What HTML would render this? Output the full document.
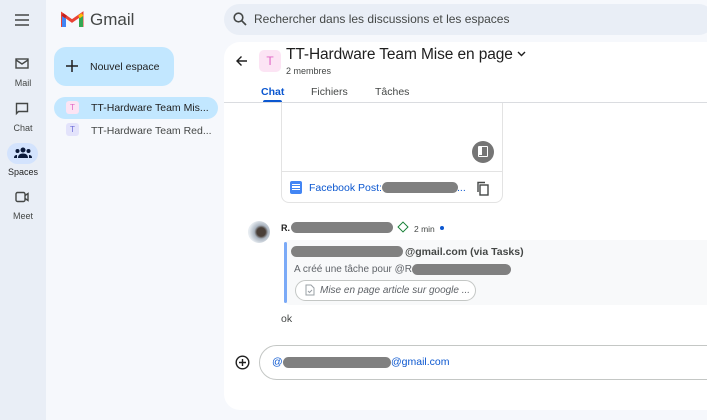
<!DOCTYPE html><html><head><meta charset="utf-8"><style>
*{margin:0;padding:0;box-sizing:border-box}
body{width:707px;height:420px;overflow:hidden;background:#f6f8fc;font-family:"Liberation Sans",sans-serif;position:relative;color:#1f1f1f}
.a{position:absolute}
.pill{position:absolute;background:#808080;border-radius:6px}
.rl{font-size:9px;color:#444746;text-align:center;width:46px;left:0}
</style></head><body>
<div class="a" style="left:0;top:0;width:46px;height:420px;background:#e9eef6"></div>
<svg class="a" style="left:14px;top:13px" width="16" height="14"><path d="M1 2h14M1 7h14M1 12h14" stroke="#444746" stroke-width="1.6"/></svg>
<svg class="a" style="left:15px;top:58px" width="14" height="12"><rect x="1" y="1" width="12" height="9" fill="none" stroke="#444746" stroke-width="1.4"/><path d="M1 2l6 4 6-4" fill="none" stroke="#444746" stroke-width="1.4"/></svg>
<div class="a rl" style="top:78px">Mail</div>
<svg class="a" style="left:15px;top:102px" width="14" height="14"><path d="M1.5 1.5h11v8h-9l-2 2z" fill="none" stroke="#444746" stroke-width="1.4"/></svg>
<div class="a rl" style="top:123px">Chat</div>
<div class="a" style="left:7px;top:143px;width:31px;height:21px;border-radius:11px;background:#d3e3fd"></div>
<svg class="a" style="left:14px;top:147px" width="18" height="12"><circle cx="9" cy="3" r="2.5" fill="#0b1a3a"/><circle cx="3.5" cy="4" r="2" fill="#0b1a3a"/><circle cx="14.5" cy="4" r="2" fill="#0b1a3a"/><path d="M4 11c0-3 2-4.5 5-4.5s5 1.5 5 4.5zM0 11c0-2 1-3 3-3v3zM18 11c0-2-1-3-3-3v3z" fill="#0b1a3a"/></svg>
<div class="a rl" style="top:167px;color:#1f1f1f">Spaces</div>
<svg class="a" style="left:15px;top:191px" width="14" height="12"><rect x="1" y="1.5" width="9" height="9" rx="1.5" fill="none" stroke="#444746" stroke-width="1.4"/><path d="M10 4.5l3-2v7l-3-2" fill="none" stroke="#444746" stroke-width="1.4"/></svg>
<div class="a rl" style="top:211px">Meet</div>
<svg class="a" style="left:61px;top:11px" width="23" height="17"><path d="M1 16V3l10 7 10-7v13" fill="none" stroke="#ea4335" stroke-width="3"/><path d="M1 5v11h4V7z" fill="#4285f4"/><path d="M22 5v11h-4V7z" fill="#34a853"/><path d="M1.5 3.5 5 6" stroke="#c5221f" stroke-width="3"/><path d="M21.5 3.5 18 6" stroke="#fbbc04" stroke-width="3"/></svg>
<div class="a" style="left:90px;top:10px;font-size:17px;color:#444746">Gmail</div>
<div class="a" style="left:54px;top:47px;width:120px;height:39px;border-radius:12px;background:#c2e7ff"></div>
<svg class="a" style="left:66px;top:60px" width="12" height="12"><path d="M6 0v12M0 6h12" stroke="#1f1f1f" stroke-width="1.5"/></svg>
<div class="a" style="left:90px;top:61px;font-size:10.5px">Nouvel espace</div>
<div class="a" style="left:54px;top:97px;width:164px;height:22px;border-radius:11px;background:#c2e7ff"></div>
<div class="a" style="left:66px;top:101px;width:13px;height:13px;border-radius:3px;background:#fce4f4;color:#e066c5;font-size:8px;text-align:center;line-height:13px">T</div>
<div class="a" style="left:91px;top:102px;font-size:10.5px;color:#1f1f1f">TT-Hardware Team Mis...</div>
<div class="a" style="left:66px;top:123px;width:13px;height:13px;border-radius:3px;background:#e3e3fb;color:#6f6fd8;font-size:8px;text-align:center;line-height:13px">T</div>
<div class="a" style="left:91px;top:125px;font-size:10.5px;color:#444746">TT-Hardware Team Red...</div>
<div class="a" style="left:224px;top:4px;width:490px;height:31px;border-radius:16px;background:#e9eef6"></div>
<svg class="a" style="left:233px;top:12px" width="14" height="14"><circle cx="5.5" cy="5.5" r="4.3" fill="none" stroke="#444746" stroke-width="1.6"/><path d="M8.7 8.7 13 13" stroke="#444746" stroke-width="1.7"/></svg>
<div class="a" style="left:254px;top:12px;font-size:12px;color:#444746">Rechercher dans les discussions et les espaces</div>
<div class="a" style="left:224px;top:42px;width:500px;height:368px;border-radius:16px;background:#fff"></div>
<svg class="a" style="left:235px;top:55px" width="13" height="12"><path d="M12 6H2M6.5 1.5 2 6l4.5 4.5" fill="none" stroke="#1f1f1f" stroke-width="1.4"/></svg>
<div class="a" style="left:259px;top:50px;width:22px;height:22px;border-radius:5px;background:#fce4f4;color:#e066c5;font-size:12px;text-align:center;line-height:22px">T</div>
<div class="a" style="left:286px;top:46px;font-size:15.5px;letter-spacing:-0.1px;white-space:nowrap">TT-Hardware Team Mise en page</div>
<svg class="a" style="left:517px;top:51px" width="9" height="6"><path d="M1 1l3.5 3.5L8 1" fill="none" stroke="#1f1f1f" stroke-width="1.4"/></svg>
<div class="a" style="left:286px;top:66px;font-size:9px;color:#444746">2 membres</div>
<div class="a" style="left:261px;top:86px;font-size:10.5px;color:#0b57d0;font-weight:bold">Chat</div>
<div class="a" style="left:311px;top:86px;font-size:10.5px;color:#444746">Fichiers</div>
<div class="a" style="left:375px;top:86px;font-size:10.5px;color:#444746">Tâches</div>
<div class="a" style="left:263px;top:100px;width:19px;height:3px;background:#0b57d0;border-radius:2px 2px 0 0"></div>
<div class="a" style="left:224px;top:102px;width:483px;height:1px;background:#dadce0"></div>
<div class="a" style="left:281px;top:103px;width:222px;height:100px;border:1px solid #e3e3e3;border-top:none;border-radius:0 0 8px 8px"></div>
<div class="a" style="left:281px;top:171px;width:222px;height:1px;background:#e3e3e3"></div>
<div class="a" style="left:472px;top:141px;width:22px;height:22px;border-radius:50%;background:#757575"></div>
<div class="a" style="left:478px;top:146px;width:10px;height:11px;border:1.5px solid #fff;border-radius:1px"><div style="width:3px;height:8px;background:#fff"></div></div>
<div class="a" style="left:290px;top:181px;width:12px;height:13px;border-radius:2px;background:#4285f4"></div>
<div class="a" style="left:292px;top:184px;width:8px;height:6px;border-top:1.3px solid #fff;border-bottom:1.3px solid #fff"><div style="margin-top:1.3px;height:1.3px;background:#fff"></div></div>
<div class="a" style="left:309px;top:182px;font-size:10.5px;color:#0b57d0">Facebook Post:</div>
<div class="pill" style="left:382px;top:182px;width:76px;height:11px"></div>
<div class="a" style="left:457px;top:182px;font-size:10.5px;color:#0b57d0">...</div>
<svg class="a" style="left:476px;top:181px" width="14" height="15"><rect x="4" y="4" width="8" height="10" fill="none" stroke="#444746" stroke-width="1.4"/><path d="M2 11V1.5h7" fill="none" stroke="#444746" stroke-width="1.4"/></svg>
<div class="a" style="left:248px;top:221px;width:22px;height:22px;border-radius:50%;background:radial-gradient(circle at 60% 50%,#4a3f38 25%,#aab4c0 40%,#e6ebf0 70%)"></div>
<div class="a" style="left:281px;top:223px;font-size:9px;font-weight:bold">R.</div>
<div class="pill" style="left:291px;top:222px;width:102px;height:11px"></div>
<div class="a" style="left:399px;top:223px;width:8px;height:8px;border:1.6px solid #188038;transform:rotate(45deg)"></div>
<div class="a" style="left:414px;top:224px;font-size:8.5px;color:#444746">2 min</div>
<div class="a" style="left:440px;top:226px;width:4px;height:4px;border-radius:50%;background:#0b57d0"></div>
<div class="a" style="left:284px;top:240px;width:430px;height:65px;background:#f8f9fa;border-radius:6px"></div>
<div class="a" style="left:284px;top:242px;width:3px;height:61px;background:#7baaf7;border-radius:2px"></div>
<div class="pill" style="left:291px;top:246px;width:112px;height:11px"></div>
<div class="a" style="left:405px;top:246px;font-size:10.5px;font-weight:bold;color:#444746">@gmail.com (via Tasks)</div>
<div class="a" style="left:294px;top:264px;font-size:10px;color:#5f6368">A créé une tâche pour @R.</div>
<div class="pill" style="left:412px;top:264px;width:99px;height:11px"></div>
<div class="a" style="left:295px;top:280px;width:181px;height:21px;border:1px solid #c4c7c5;border-radius:11px;background:#fff"></div>
<svg class="a" style="left:305px;top:284px" width="10" height="12"><path d="M1 1h5l3 3v7H1z" fill="none" stroke="#9aa0a6" stroke-width="1"/><path d="M3 7l1.5 1.5L7 6" fill="none" stroke="#9aa0a6"/></svg>
<div class="a" style="left:320px;top:285px;font-size:10px;font-style:italic;color:#5f6368">Mise en page article sur google ...</div>
<div class="a" style="left:281px;top:313px;font-size:10.5px;color:#444746">ok</div>
<svg class="a" style="left:235px;top:355px" width="15" height="15"><circle cx="7.5" cy="7.5" r="6.3" fill="none" stroke="#1f1f1f" stroke-width="1.4"/><path d="M7.5 4v7M4 7.5h7" stroke="#1f1f1f" stroke-width="1.4"/></svg>
<div class="a" style="left:259px;top:345px;width:470px;height:35px;border:1px solid #c4c7c5;border-radius:18px"></div>
<div class="a" style="left:272px;top:356px;font-size:10.5px;color:#0b57d0">@</div>
<div class="pill" style="left:283px;top:357px;width:108px;height:11px"></div>
<div class="a" style="left:391px;top:356px;font-size:10.5px;color:#0b57d0">@gmail.com</div>
</body></html>
